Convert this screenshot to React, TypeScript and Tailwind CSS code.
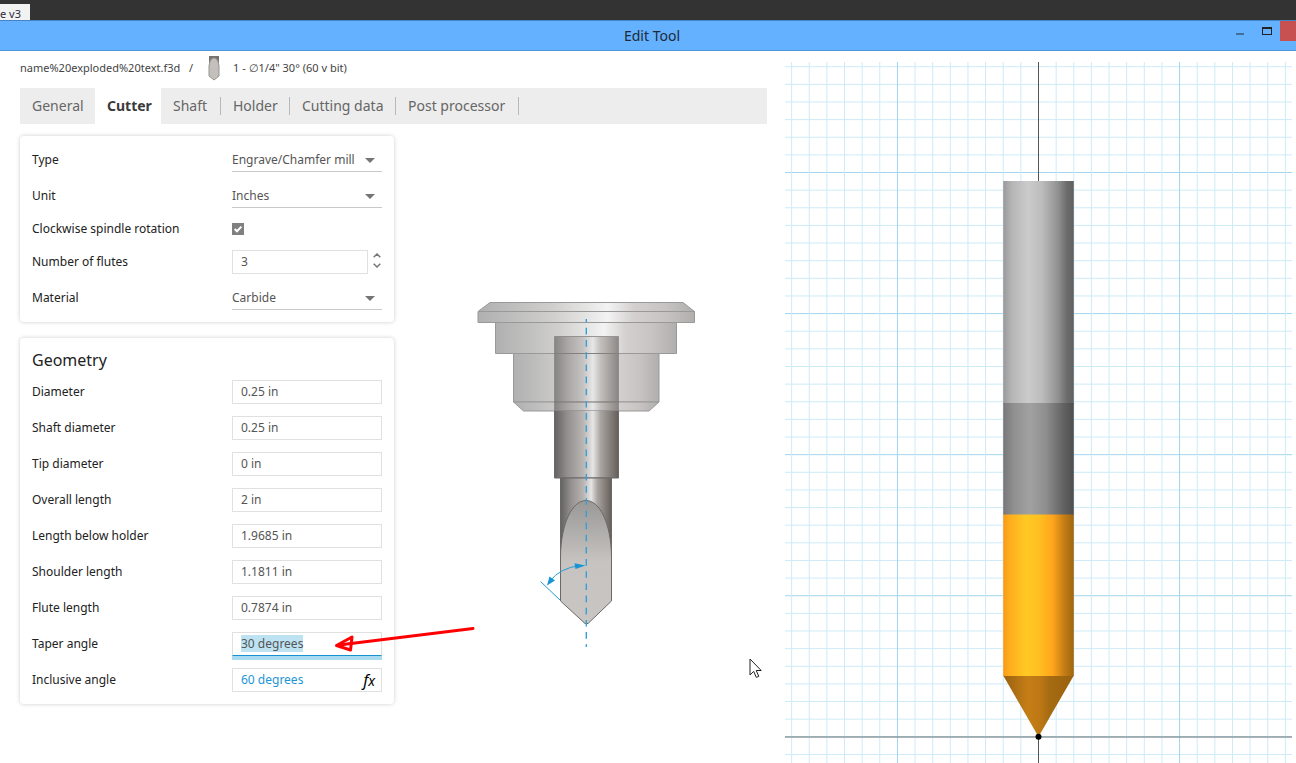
import React, { useEffect, useRef } from "react";

const tabs = [
  { name: "General", className: "w-[75px]", divider: false },
  { name: "Cutter", className: "w-[66px] bg-white font-bold text-[#3a3a3a]", divider: false },
  { name: "Shaft", className: "w-[60px]", divider: true },
  { name: "Holder", className: "w-[69px]", divider: true },
  { name: "Cutting data", className: "w-[106px]", divider: true },
  { name: "Post processor", className: "w-[123px]", divider: true },
];

const geometry = [
  { id: "diameter", label: "Diameter", value: "0.25 in" },
  { id: "shaft-diameter", label: "Shaft diameter", value: "0.25 in" },
  { id: "tip-diameter", label: "Tip diameter", value: "0 in" },
  { id: "overall-length", label: "Overall length", value: "2 in" },
  { id: "below-holder", label: "Length below holder", value: "1.9685 in" },
  { id: "shoulder-length", label: "Shoulder length", value: "1.1811 in" },
  { id: "flute-length", label: "Flute length", value: "0.7874 in" },
];

const inputStyle = "h-6 border border-[#e0e0e0] bg-white px-2 pb-[2px] text-xs text-[#555] outline-none";

const Row = ({ id, label, children }: { id: string; label: string; children: React.ReactNode }) => (
  <div className="flex h-9 items-center justify-between">
    <label htmlFor={id} className="text-[#222]">
      {label}
    </label>
    {children}
  </div>
);

const Dropdown = ({ id, value }: { id: string; value: string }) => (
  <div className="relative w-[150px]">
    <select
      id={id}
      className="h-6 w-full appearance-none border-b border-[#c8c8c8] bg-white text-xs text-[#555] outline-none"
    >
      <option>{value}</option>
    </select>
    <svg className="pointer-events-none absolute right-[7px] top-[10px]" width="10" height="5" viewBox="0 0 10 5">
      <path d="M0 0h10L5 5z" fill="#757575" />
    </svg>
  </div>
);

const TitleBar = () => (
  <header>
    <div className="flex h-5 items-end bg-[#333]">
      <div className="h-4 w-[30px] overflow-hidden bg-[#f2f2f2] text-[11px] leading-5 text-[#2b2b3d]">e v3</div>
    </div>
    <div className="grid h-[31px] grid-cols-[1fr_auto_1fr] border-y border-t-[#4584c4] border-b-[#4f97dc] bg-[#64b1ff] pl-2">
      <h1 className="col-start-2 text-sm leading-[30px] text-[#1e2a36]">Edit Tool</h1>
      <div className="flex items-start justify-end">
        <button aria-label="Minimize" className="flex h-5 w-7 justify-center pt-3">
          <span className="h-[2px] w-2 bg-[#426e9b]" />
        </button>
        <button aria-label="Maximize" className="flex h-5 w-[26px] justify-center pt-[6px]">
          <span className="h-2 w-[10px] border border-t-2 border-[#222]" />
        </button>
        <button aria-label="Close" className="h-5 w-4 bg-[#c75050]" />
      </div>
    </div>
  </header>
);

const Breadcrumb = () => (
  <div className="mb-[2px] flex h-[35px] items-center text-[11px] text-[#444]">
    <span className="w-[169px]">name%20exploded%20text.f3d</span>
    <span className="w-[18px]">/</span>
    <svg width="14" height="26" viewBox="0 0 14 26">
      <path d="M2 0h10v10H2z" fill="#77736f" />
      <path d="M2 10Q3 2 7 2t5 8v10l-5 4-5-4z" fill="#c2bfbc" stroke="#999591" />
    </svg>
    <span className="ml-3">1 - ∅1/4" 30° (60 v bit)</span>
  </div>
);

const Tabs = () => (
  <nav className="flex h-9 bg-[#ededed] text-sm text-[#666]">
    {tabs.map((tab) => (
      <button key={tab.name} className={`flex items-center whitespace-nowrap pl-3 ${tab.className}`}>
        <span className="flex-1 text-left">{tab.name}</span>
        {tab.divider && <span className="h-[18px] w-px bg-[#b9b9b9]" />}
      </button>
    ))}
  </nav>
);

const GeneralCard = () => (
  <section className="rounded-sm bg-white px-3 py-[6px] shadow-[0_0_4px_rgba(0,0,0,0.2)]">
    <Row id="type" label="Type">
      <Dropdown id="type" value="Engrave/Chamfer mill" />
    </Row>
    <Row id="unit" label="Unit">
      <Dropdown id="unit" value="Inches" />
    </Row>
    <div className="flex h-[30px] items-center justify-between">
      <label htmlFor="clockwise" className="text-[#222]">
        Clockwise spindle rotation
      </label>
      <div className="grid w-[150px]">
        <input
          id="clockwise"
          type="checkbox"
          defaultChecked
          className="col-start-1 row-start-1 size-3 appearance-none bg-[#808080]"
        />
        <svg className="pointer-events-none col-start-1 row-start-1" width="12" height="12" viewBox="0 0 12 12">
          <path d="M2.7 6l2.3 2.3L9.4 3.6" fill="none" stroke="#fff" strokeWidth="2" />
        </svg>
      </div>
    </div>
    <Row id="flutes" label="Number of flutes">
      <div className="flex w-[150px] gap-1">
        <input id="flutes" defaultValue="3" className={`w-[136px] ${inputStyle}`} />
        <div className="flex w-[10px] flex-col">
          <button aria-label="Increase flutes" className="flex h-[10px] items-center justify-center">
            <svg width="8" height="5" viewBox="0 0 8 5">
              <path d="M.7 4.3L4 1l3.3 3.3" fill="none" stroke="#777" strokeWidth="1.5" />
            </svg>
          </button>
          <button aria-label="Decrease flutes" className="flex h-[10px] items-center justify-center">
            <svg width="8" height="5" viewBox="0 0 8 5">
              <path d="M.7.7L4 4 7.3.7" fill="none" stroke="#777" strokeWidth="1.5" />
            </svg>
          </button>
        </div>
      </div>
    </Row>
    <Row id="material" label="Material">
      <Dropdown id="material" value="Carbide" />
    </Row>
  </section>
);

const GeometryCard = () => {
  const taper = useRef<HTMLInputElement>(null);

  // the taper angle is ready to be typed over when the dialog opens
  useEffect(() => {
    taper.current?.focus({ preventScroll: true });
    taper.current?.select();
  }, []);

  return (
    <section className="rounded-sm bg-white px-3 py-[6px] shadow-[0_0_4px_rgba(0,0,0,0.2)]">
      <h2 className="h-[30px] text-base leading-8 text-[#222]">Geometry</h2>
      {geometry.map((field) => (
        <Row key={field.id} id={field.id} label={field.label}>
          <input id={field.id} defaultValue={field.value} className={`w-[150px] ${inputStyle}`} />
        </Row>
      ))}
      <Row id="taper" label="Taper angle">
        <input
          id="taper"
          ref={taper}
          defaultValue="30 degrees"
          className="h-6 w-[150px] border border-[#e0e0e0] border-b-[#1891d0] px-2 pb-[2px] text-xs text-[#555] caret-transparent shadow-[0_4px_0_#a8daf0] outline-none selection:bg-[#bde3f3] selection:text-[#555]"
        />
      </Row>
      <Row id="inclusive" label="Inclusive angle">
        <div className="flex h-6 w-[150px] items-center border border-[#e0e0e0]">
          <input
            id="inclusive"
            defaultValue="60 degrees"
            className="min-w-0 flex-1 pl-2 text-xs text-[#1a96d4] outline-none"
          />
          <button aria-label="Edit expression" className="mr-[6px] text-base italic leading-5 text-black">
            f<span className="text-sm">x</span>
          </button>
        </div>
      </Row>
    </section>
  );
};

const CutterDiagram = () => (
  <svg className="shrink-0" width="221" height="350" viewBox="476 300 221 350">
    <defs>
      <linearGradient id="holder">
        <stop offset="0" stopColor="#b0b0b0" />
        <stop offset=".35" stopColor="#d0cfce" />
        <stop offset=".6" stopColor="#f3f3f3" />
        <stop offset=".72" stopColor="#d3d0cf" />
        <stop offset=".87" stopColor="#c6c3c1" />
        <stop offset="1" stopColor="#b0afae" />
      </linearGradient>
      <linearGradient id="shank">
        <stop offset="0" stopColor="#636161" />
        <stop offset=".2" stopColor="#928f8e" />
        <stop offset=".45" stopColor="#b8b5b3" />
        <stop offset=".6" stopColor="#e6e6e6" />
        <stop offset=".72" stopColor="#aaa5a1" />
        <stop offset="1" stopColor="#655e5b" />
      </linearGradient>
      <linearGradient id="flute" x1="0" y1="0" x2="0" y2="1">
        <stop offset="0" stopColor="#999896" />
        <stop offset=".5" stopColor="#c6c3c0" />
        <stop offset="1" stopColor="#c8c5c3" />
      </linearGradient>
    </defs>
    <g fill="url(#holder)" stroke="#9a9999">
      <path d="M490 302.500H683L694.500 311.500H478z" />
      <path d="M478 311.500H694.500V322.500H478z" />
      <path d="M495.500 322.500H676.500V353.500H495.500z" />
      <path d="M513.500 353.500H659V402H513.500z" />
      <path d="M513.500 402H659L649 411H523.500z" />
    </g>
    <path d="M554.500 336.500H618.500V411H554.500z" fill="url(#shank)" stroke="#6f6c6b" opacity=".66" />
    <path d="M554.500 411H618.500V478H554.500z" fill="url(#shank)" />
    <path d="M554.500 411V478H618.500V411" fill="none" stroke="#6b6867" />
    <path d="M554 353.500h65M554 402h65" stroke="#838180" />
    <path d="M560.500 478H611.500V560H560.500z" fill="url(#shank)" stroke="#6b6867" />
    <path
      d="M560.500 601V556C561 524 572 500.500 586 500.500S611 524 611.500 556V601L588 623.500H585z"
      fill="url(#flute)"
      stroke="#6b6867"
    />
    <path d="M586.300 319V647" stroke="#349fd9" strokeWidth="1.4" strokeDasharray="6.6 5.57" strokeDashoffset="3.3" />
    <g stroke="#249bd8" fill="none">
      <path d="M540.500 581.500L560 600" />
      <path d="M550 581Q560 568 580 565.500" />
    </g>
    <path d="M547 585.500L549.500 576.500L555 580.500zM585.500 565.500L574.500 563.200L575.500 569z" fill="#1894d4" />
  </svg>
);

const centerX = 1038.5;
const originY = 736.8;
const minor = 141.07 / 8;

const ToolPreview = () => (
  <svg
    className="mt-[11px] mr-1 h-auto min-w-0 flex-1"
    viewBox="785 62 507 701"
    preserveAspectRatio="xMidYMin slice"
  >
    <defs>
      <linearGradient id="steel">
        <stop offset="0" stopColor="#999" />
        <stop offset=".12" stopColor="#b5b5b5" />
        <stop offset=".35" stopColor="#cbcbcb" />
        <stop offset=".55" stopColor="#bcbcbc" />
        <stop offset=".78" stopColor="#909090" />
        <stop offset=".9" stopColor="#6c6c6c" />
        <stop offset="1" stopColor="#606060" />
      </linearGradient>
      <linearGradient id="darkSteel">
        <stop offset="0" stopColor="#777" />
        <stop offset=".15" stopColor="#909090" />
        <stop offset=".38" stopColor="#a1a1a1" />
        <stop offset=".6" stopColor="#8f8f8f" />
        <stop offset=".85" stopColor="#636363" />
        <stop offset="1" stopColor="#4e4e4e" />
      </linearGradient>
      <linearGradient id="gold">
        <stop offset="0" stopColor="#f79b18" />
        <stop offset=".08" stopColor="#ffab1d" />
        <stop offset=".32" stopColor="#ffc924" />
        <stop offset=".5" stopColor="#ffc021" />
        <stop offset=".7" stopColor="#ffa51c" />
        <stop offset=".85" stopColor="#c98016" />
        <stop offset="1" stopColor="#9e6510" />
      </linearGradient>
      <linearGradient id="cone">
        <stop offset="0" stopColor="#986010" />
        <stop offset=".35" stopColor="#c57e16" />
        <stop offset=".52" stopColor="#bd7815" />
        <stop offset=".65" stopColor="#a66c12" />
        <stop offset="1" stopColor="#99600f" />
      </linearGradient>
    </defs>
    {Array.from({ length: 40 }, (_, i) => {
      const y = originY - (i - 1) * minor;
      return <path key={i} d={`M785 ${y}H1292`} stroke={(i - 1) % 8 === 0 ? "#a2d5ee" : "#cdebf8"} />;
    })}
    {Array.from({ length: 29 }, (_, i) => {
      const x = centerX + (i - 14) * minor;
      return <path key={i} d={`M${x} 62V763`} stroke={Math.abs(i - 14) === 8 ? "#a2d5ee" : "#cdebf8"} />;
    })}
    <path d="M785 737H1292" stroke="#777" />
    <path d="M1038.500 62V763" stroke="#555" />
    <path d="M1003.200 181H1073.800V404H1003.200z" fill="url(#steel)" />
    <path d="M1003.200 403H1073.800V515H1003.200z" fill="url(#darkSteel)" />
    <path d="M1003.200 675.500H1073.800L1039.500 735H1037.500z" fill="url(#cone)" />
    <path d="M1003.200 514.500H1073.800V676H1003.200z" fill="url(#gold)" />
    <circle cx="1038.500" cy="736.800" r="3" />
  </svg>
);

const App = () => {
  return (
    <div className="flex min-h-screen flex-col bg-white font-['Noto_Sans',sans-serif] text-xs">
      <TitleBar />
      <main className="relative flex flex-1 gap-[18px] pl-5">
        <div className="w-[747px] shrink-0">
          <Breadcrumb />
          <Tabs />
          <div className="mt-3 flex gap-3">
            <div className="flex w-[374px] flex-col gap-4">
              <GeneralCard />
              <GeometryCard />
            </div>
            <div className="flex flex-1 items-start justify-center pt-[164px]">
              <CutterDiagram />
            </div>
          </div>
        </div>
        <ToolPreview />

        {/* Callout arrow and mouse pointer */}
        <svg className="pointer-events-none absolute left-[330px] top-[569px]" width="150" height="36" viewBox="330 620 150 36">
          <path d="M473 628.500L351 643.500" stroke="#f00" strokeWidth="3" strokeLinecap="round" />
          <path d="M336.500 645.500L352 637L350.500 650z" fill="#fff" stroke="#f00" strokeWidth="3" strokeLinejoin="round" />
          <path d="M352 643.300L337 645.500" stroke="#f00" strokeWidth="3" />
        </svg>
        <svg className="pointer-events-none absolute left-[749px] top-[607px]" width="13" height="21" viewBox="0 0 13 21">
          <path d="M1 1v16l3.700-3.600 2.600 6 2.500-1.100-2.600-5.800h5z" fill="#fff" stroke="#222" />
        </svg>
      </main>
    </div>
  );
};

export default App;
